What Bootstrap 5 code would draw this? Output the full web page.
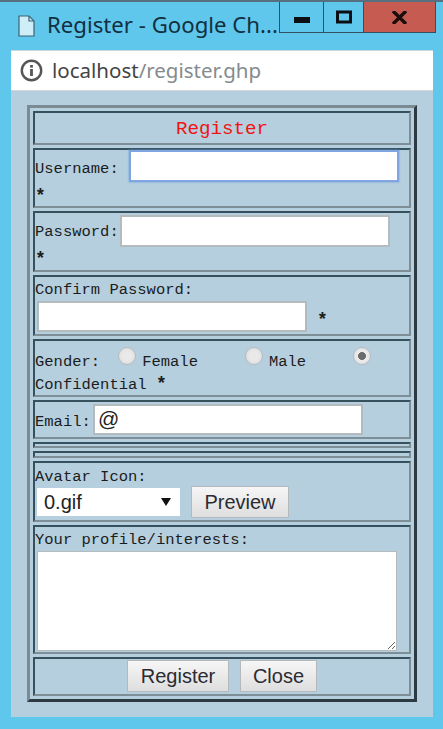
<!DOCTYPE html>
<html lang="en">
<head>
  <meta charset="UTF-8">
  <meta name="viewport" content="width=device-width, initial-scale=1.0">
  <title>Register - Google Chrome</title>
  <link href="https://cdn.jsdelivr.net/npm/bootstrap@5.3.0/dist/css/bootstrap.min.css" rel="stylesheet">
  <style>
    html, body { height: 100%; }
    body {
      background-color: #5fc7ec;
      border-top: 2px solid #56707f;
      overflow: hidden;
    }
    .title-bar { height: 48px; padding-left: 18px; }
    .title-text {
      font-family: "Noto Sans", sans-serif;
      font-size: 22.2px;
      color: #12303f;
      width: 244px;
      flex: none;
      padding-left: 12px;
      white-space: nowrap;
      padding-bottom: 2px;
    }
    .win-btns { height: 31px; border: 1px solid #33505f; border-top: 0; align-self: flex-start; flex: none; }
    .win-btn { height: 100%; display: flex; align-items: center; justify-content: center; border-right: 1px solid #33505f; }
    .win-btn:last-child { border-right: 0; }
    .win-min { width: 44px; }
    .win-min svg { margin-top: 5px; }
    .win-max { width: 40px; }
    .win-close { width: 71px; background-color: #c65c51; }
    .win-shell { margin: 0 10px 0 11px; height: 667px; background-color: #b5cfde; }
    .addr-bar {
      height: 41px;
      background-color: #fff;
      font-family: "Noto Sans", sans-serif;
      font-size: 20.5px;
      color: #444;
      padding-left: 9px;
      border-top: 1px solid #c9d6dc;
      border-bottom: 1px solid #d5d5d5;
    }
    .addr-bar svg { margin-right: 9px; }
    .addr-path { color: #858b8e; }
    .form-frame {
      margin: 14px 16px 0 16px;
      height: 597px;
      border: 3px solid;
      border-color: #7b8b94 #2d3a42 #2d3a42 #7b8b94;
      padding: 3px;
      gap: 3px;
      font-family: "Liberation Mono", monospace;
      font-size: 15.5px;
      line-height: 19px;
      color: #1c1c1c;
    }
    .cell-box {
      border: 2px solid;
      border-color: #37505e #7d8e97 #7d8e97 #37505e;
      flex: none;
    }
    .h-title { height: 34px; padding-top: 2px; }
    .h-user { height: 60px; }
    .h-pass { height: 61px; padding-top: 2px; }
    .h-conf { height: 61px; padding-top: 4px; }
    .h-gender { height: 58px; }
    .h-mail { height: 39px; }
    .h-thin { height: 6px; }
    .h-thin-b { height: 7px; }
    .h-avatar { height: 61px; padding-top: 5px; }
    .h-profile { height: 129px; padding-top: 4px; }
    .h-btns { height: 39px; }
    .h-btns .old-btn { margin-top: -2px; }
    .title-red { color: #f01414; font-size: 19.2px; line-height: 29px; }
    .txt-input {
      width: 270px;
      height: 32px;
      border: 2px solid #b4bbbf;
      background-color: #fff;
      padding: 0 3px;
      font-family: "Liberation Sans", sans-serif;
      font-size: 21px;
      color: #222;
      outline: 0;
      display: block;
      border-radius: 0;
    }
    .txt-focus { border-color: #7fa6e0; box-shadow: 0 0 2px #6d9be0; }
    .star-mark { font-weight: 700; font-size: 18px; line-height: 19px; }
    .label-user { width: 94px; margin-top: 6px; }
    .label-pass { width: 85px; margin-top: 2px; }
    .label-mail { width: 58px; margin-top: 6px; }
    .input-mail { height: 31px; margin-top: -1px; }
    .star-user { margin-top: 5px; }
    .star-pass { margin-top: 3px; }
    .gap-conf { margin-left: 2px; margin-top: 1px; height: 31px; }
    .star-conf { margin-left: 10px; margin-top: 11px; }
    .line-gender { height: 22px; margin-top: 9px; }
    .line-conf { margin-top: 3px; }
    .rad {
      appearance: none;
      width: 18px;
      height: 18px;
      border-radius: 50%;
      border: 1px solid #b3bcc1;
      background: radial-gradient(circle, #e9e9e9 40%, #d6d6d6 100%);
      margin: 0;
      position: relative;
      top: -7px;
      flex: none;
    }
    .rad:checked { background: radial-gradient(circle, #6b6b6b 0, #6b6b6b 32%, #ececec 38%, #dcdcdc 100%); }
    .rad-a { margin-left: 18px; margin-right: 6px; }
    .rad-b { margin-left: 47px; margin-right: 6px; }
    .rad-c { margin-left: 47px; }
    .line-avatar { margin-top: -1px; }
    .sel-avatar {
      appearance: none;
      width: 143px;
      height: 28px;
      border: 0;
      border-radius: 0;
      margin-left: 2px;
      padding-left: 7px;
      font-family: "Liberation Sans", sans-serif;
      font-size: 20px;
      line-height: 28px;
      color: #222;
      background: #fff url("data:image/svg+xml,%3Csvg xmlns='http://www.w3.org/2000/svg' width='10' height='10'%3E%3Cpath d='M0 1h10L5 9z' fill='%23111'/%3E%3C/svg%3E") no-repeat 124px 9px;
    }
    .old-btn {
      height: 32px;
      padding: 0;
      border: 1px solid #b4b9bc;
      border-radius: 1px;
      background: linear-gradient(#f6f6f6, #dedede);
      font-family: "Liberation Sans", sans-serif;
      font-size: 20px;
      line-height: 28px;
      color: #2b2b33;
    }
    .btn-preview { width: 98px; margin-left: 11px; }
    .btn-register { width: 102px; }
    .btn-close-win { width: 77px; margin-left: 11px; }
    .area-profile {
      display: block;
      width: 360px;
      height: 100px;
      margin-left: 2px;
      margin-top: 1px;
      border: 1px solid #b4bbbf;
      border-radius: 0;
      background-color: #fff;
      outline: 0;
      resize: both;
    }
  </style>
</head>
<body>
  <div class="title-bar d-flex align-items-center">
    <svg width="17" height="22" viewBox="0 0 17 22" fill="#cfeef8" stroke="#3d6373" stroke-width="1.2">
      <path d="M1 1h10l5 5v15H1z"/>
      <path d="M11 1v5h5" fill="none"/>
    </svg>
    <div class="title-text">Register - Google Ch...</div>
    <div class="win-btns d-flex">
      <div class="win-btn win-min"><svg width="16" height="6"><rect width="16" height="6" y="0" fill="#0b0f14"/></svg></div>
      <div class="win-btn win-max"><svg width="16" height="14" fill="none" stroke="#0b0f14"><rect x="1.5" y="2" width="13" height="10" stroke-width="3"/></svg></div>
      <div class="win-btn win-close"><svg width="15" height="13" stroke="#1a0d0c" stroke-width="3.4"><path d="M1 0l13 13M14 0L1 13"/></svg></div>
    </div>
  </div>

  <div class="win-shell">
    <div class="addr-bar d-flex align-items-center">
      <svg width="23" height="23" viewBox="0 0 23 23" fill="none" stroke="#555">
        <circle cx="11.5" cy="11.5" r="9.7" stroke-width="2.4"/>
        <path d="M11.5 10v7" stroke-width="2.8"/>
        <path d="M11.5 6v2.6" stroke-width="2.8"/>
      </svg>
      <span>localhost<span class="addr-path">/register.ghp</span></span>
    </div>

    <form class="form-frame d-flex flex-column">
      <div class="cell-box h-title text-center title-red">Register</div>

      <div class="cell-box h-user">
        <div class="d-flex align-items-center">
          <span class="label-user">Username:</span>
          <input type="text" class="txt-input txt-focus">
        </div>
        <div class="star-user star-mark">*</div>
      </div>

      <div class="cell-box h-pass">
        <div class="d-flex align-items-center">
          <span class="label-pass">Password:</span>
          <input type="password" class="txt-input">
        </div>
        <div class="star-pass star-mark">*</div>
      </div>

      <div class="cell-box h-conf">
        <div>Confirm Password:</div>
        <div class="d-flex">
          <input type="password" class="txt-input gap-conf">
          <span class="star-conf star-mark">*</span>
        </div>
      </div>

      <div class="cell-box h-gender">
        <div class="d-flex align-items-end line-gender">
          <span>Gender:</span>
          <input type="radio" name="gender" class="rad rad-a"><span>Female</span>
          <input type="radio" name="gender" class="rad rad-b"><span>Male</span>
          <input type="radio" name="gender" class="rad rad-c" checked>
        </div>
        <div class="line-conf">Confidential <span class="star-mark">*</span></div>
      </div>

      <div class="cell-box h-mail">
        <div class="d-flex align-items-center h-100">
          <span class="label-mail">Email:</span>
          <input type="text" class="txt-input input-mail" value="@">
        </div>
      </div>

      <div class="cell-box h-thin"></div>
      <div class="cell-box h-thin-b"></div>

      <div class="cell-box h-avatar">
        <div>Avatar Icon:</div>
        <div class="d-flex align-items-center line-avatar">
          <select class="sel-avatar"><option>0.gif</option></select>
          <button type="button" class="old-btn btn-preview">Preview</button>
        </div>
      </div>

      <div class="cell-box h-profile">
        <div>Your profile/interests:</div>
        <textarea class="area-profile"></textarea>
      </div>

      <div class="cell-box h-btns d-flex justify-content-center align-items-center">
        <button type="button" class="old-btn btn-register">Register</button>
        <button type="button" class="old-btn btn-close-win">Close</button>
      </div>
    </form>
  </div>

  <script src="https://cdn.jsdelivr.net/npm/bootstrap@5.3.0/dist/js/bootstrap.bundle.min.js"></script>
</body>
</html>
